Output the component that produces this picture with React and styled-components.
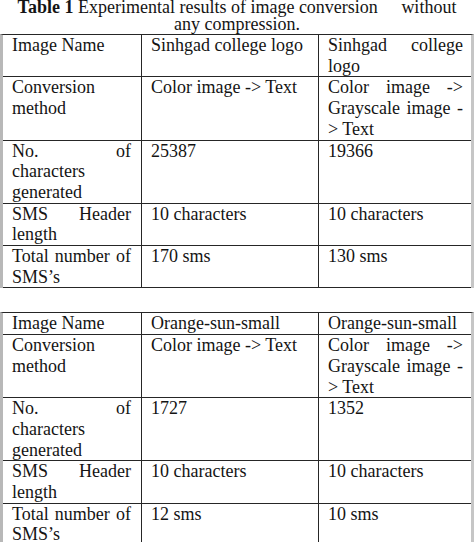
import React from "react";
import styled, { createGlobalStyle } from "styled-components";

const Global = createGlobalStyle`
  html, body { margin: 0; padding: 0; background: #fff; }
  body {
    width: 474px;
    height: 542px;
    overflow: hidden;
    font-family: "Liberation Serif", "Times New Roman", serif;
    color: #141414;
  }
`;

const Page = styled.div`
  width: 474px;
  display: flex;
  flex-direction: column;
`;

const Caption = styled.div`
  display: flex;
  flex-direction: column;
  align-items: center;
  margin: -1px 0 1px;
  font-size: 18px;
  line-height: 17px;
  white-space: nowrap;
`;

const CaptionLine = styled.span`
  display: block;
`;

const Bold = styled.b`
  font-weight: 700;
`;

const Gap = styled.span`
  display: inline-block;
  width: 19px;
`;

const Grid = styled.div`
  display: grid;
  grid-template-columns: 139px 177px 1fr;
  border-left: 3px solid #b8b8b8;
  border-right: 3px solid #c6c6c6;
  border-top: 1px solid #262626;
  margin-top: ${(p) => p.$gap}px;
`;

const Cell = styled.div`
  padding: 0 10px 0 9px;
  border-bottom: 1px solid #262626;
  border-right: ${(p) => (p.$last ? "none" : "1px solid #262626")};
  padding-right: ${(p) => (p.$last ? "8px" : "10px")};
  font-size: 18px;
  line-height: 20.7px;
  text-align: justify;
`;

const Arrow = () => (
  <>
    Color image -&gt; Grayscale image -<wbr />&gt; Text
  </>
);

const table1 = [
  ["Image Name", "Sinhgad college logo", "Sinhgad college logo"],
  ["Conversion method", "Color image -> Text", <Arrow key="a" />],
  ["No. of characters generated", "25387", "19366"],
  ["SMS Header length", "10 characters", "10 characters"],
  ["Total number of SMS\u2019s", "170 sms", "130 sms"],
];

const table2 = [
  ["Image Name", "Orange-sun-small", "Orange-sun-small"],
  ["Conversion method", "Color image -> Text", <Arrow key="b" />],
  ["No. of characters generated", "1727", "1352"],
  ["SMS Header length", "10 characters", "10 characters"],
  ["Total number of SMS\u2019s", "12 sms", "10 sms"],
];

const DataTable = ({ rows, gap }) => (
  <Grid $gap={gap}>
    {rows.map((row, r) =>
      row.map((c, i) => (
        <Cell key={`${r}-${i}`} $last={i === 2}>
          {c}
        </Cell>
      ))
    )}
  </Grid>
);

export default function App() {
  return (
    <Page>
      <Global />
      <Caption>
        <CaptionLine>
          <Bold>Table 1</Bold> Experimental results of image conversion
          <Gap /> without
        </CaptionLine>
        <CaptionLine>any compression.</CaptionLine>
      </Caption>
      <DataTable rows={table1} gap={0} />
      <DataTable rows={table2} gap={24} />
    </Page>
  );
}
